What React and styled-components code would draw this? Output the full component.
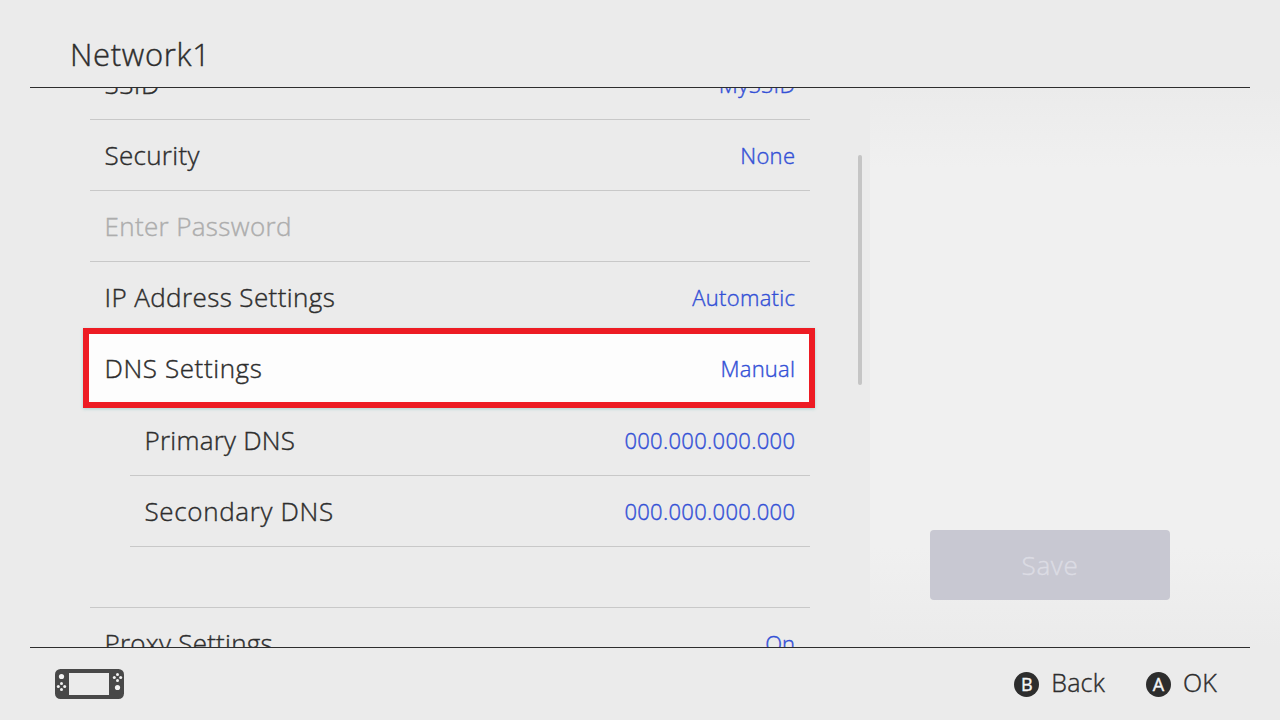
import React from "react"
import styled, { createGlobalStyle } from "styled-components"

const GlobalStyle = createGlobalStyle`
  *,
  *::before {
    box-sizing: border-box;
  }

  body {
    margin: 0;
    background-color: #ebebeb;
    color: #2d2d2d;
    font-family: "Open Sans", "Noto Sans", sans-serif;
    font-weight: 300;
    -webkit-text-stroke: 0.4px;
  }
`

const Screen = styled.div`
  display: flex;
  flex-direction: column;
  width: 1280px;
  height: 720px;
  overflow: hidden;
`

const Header = styled.header`
  display: flex;
  align-items: center;
  height: 88px;
  margin: 0 30px;
  padding: 21px 40px 0;
  border-bottom: 1px solid #2d2d2d;
`

const Title = styled.h1`
  margin: 0;
  font-size: 31px;
  font-weight: 300;
  line-height: 40px;
  letter-spacing: 0.7px;
`

const Content = styled.main`
  display: flex;
  height: 559px;
  overflow: hidden;
`

const ListPane = styled.div`
  display: flex;
  align-items: flex-start;
  width: 870px;
  padding-left: 90px;
`

const List = styled.div`
  width: 720px;
  margin-top: -39px;
`

const Row = styled.div`
  position: relative;
  display: flex;
  align-items: center;
  justify-content: space-between;
  height: 71px;
  margin-left: ${props => (props.$nested ? "40px" : 0)};
  padding: 0 15px;
  border-bottom: 1px solid #c8c8c8;
  color: ${props => (props.$disabled ? "#adadad" : "inherit")};
`

const SelectedRow = styled(Row)`
  height: 72px;
  padding-bottom: 2px;
  border-bottom: 0;

  &::before {
    content: "";
    position: absolute;
    top: -5px;
    left: -7px;
    width: 732px;
    height: 80px;
    border: 6px solid #ed1c24;
    background-color: #fdfdfd;
    box-shadow: 0 1px 3px #a9d6d2;
  }
`

const Gap = styled.div`
  height: 61px;
  border-bottom: 1px solid #c8c8c8;
`

const Label = styled.span`
  position: relative;
  margin-left: -0.5px;
  font-size: 26px;
  line-height: 36px;
  letter-spacing: ${props => props.$track || 0}px;
  white-space: nowrap;
`

const Value = styled.span`
  position: relative;
  margin-right: ${props => -(props.$track || 0)}px;
  color: #3350d6;
  font-size: 22px;
  line-height: 30px;
  letter-spacing: ${props => props.$track || 0}px;
  white-space: nowrap;
`

const ScrollThumb = styled.div`
  width: 4px;
  height: 230px;
  margin: 67px 0 0 48px;
  border-radius: 2px;
  background-color: #c5c5c5;
`

const SidePane = styled.aside`
  flex: 1;
  display: flex;
  align-items: flex-end;
  padding: 0 0 47px 60px;
  background: linear-gradient(#ebebeb, #f0f0f0 80px, #f0f0f0 460px, #ebebeb);
`

const SaveButton = styled.button`
  width: 240px;
  height: 70px;
  padding: 0;
  border: 0;
  border-radius: 4px;
  background-color: #c8c8d2;
  color: #dcdce4;
  font: inherit;
  font-size: 26px;
  letter-spacing: 0.7px;
`

const Footer = styled.footer`
  display: flex;
  align-items: center;
  justify-content: space-between;
  height: 73px;
  margin: 0 30px;
  padding: 0 33px 0 25px;
  border-top: 1px solid #2d2d2d;
`

const Hints = styled.div`
  display: flex;
  gap: 41px;
`

const Hint = styled.div`
  display: flex;
  align-items: center;
  gap: 12px;
`

const KeyBadge = styled.span`
  display: flex;
  align-items: center;
  justify-content: center;
  width: 25px;
  height: 25px;
  border-radius: 50%;
  background-color: #2d2d2d;
  color: #f5f5f5;
  font-size: 18px;
  font-weight: 400;
  line-height: 25px;
`

const HintText = styled.span`
  margin-top: -4px;
  font-size: 25px;
  line-height: 36px;
  letter-spacing: 0.2px;
`

const ConsoleIcon = () => (
  <svg width="69" height="30" viewBox="0 0 69 30">
    <rect width="69" height="30" rx="5.5" fill="#484848" />
    <rect x="14" y="4" width="40" height="22" fill="#ebebeb" />
    <g fill="#f2f2f2">
      <circle cx="6.5" cy="7.5" r="2.6" />
      <circle cx="6.5" cy="14.5" r="1.5" />
      <circle cx="3.3" cy="17.5" r="1.5" />
      <circle cx="9.7" cy="17.5" r="1.5" />
      <circle cx="6.5" cy="20.5" r="1.5" />
      <circle cx="62.5" cy="5.5" r="1.5" />
      <circle cx="59.3" cy="8.5" r="1.5" />
      <circle cx="65.7" cy="8.5" r="1.5" />
      <circle cx="62.5" cy="11.5" r="1.5" />
      <circle cx="62.5" cy="18.5" r="2.6" />
    </g>
  </svg>
)

const App = () => (
  <>
    <GlobalStyle />
    <Screen>
      <Header>
        <Title>Network1</Title>
      </Header>
      <Content>
        <ListPane>
          <List>
            <Row>
              <Label $track={0.5}>SSID</Label>
              <Value $track={0.4}>MySSID</Value>
            </Row>
            <Row>
              <Label $track={0.3}>Security</Label>
              <Value $track={0.3}>None</Value>
            </Row>
            <Row $disabled>
              <Label $track={0.35}>Enter Password</Label>
            </Row>
            <Row>
              <Label $track={0.4}>IP Address Settings</Label>
              <Value $track={0.3}>Automatic</Value>
            </Row>
            <SelectedRow>
              <Label $track={0.6}>DNS Settings</Label>
              <Value $track={0.25}>Manual</Value>
            </SelectedRow>
            <Row $nested>
              <Label $track={0.25}>Primary DNS</Label>
              <Value $track={0.3}>000.000.000.000</Value>
            </Row>
            <Row $nested>
              <Label $track={0.65}>Secondary DNS</Label>
              <Value $track={0.3}>000.000.000.000</Value>
            </Row>
            <Gap />
            <Row>
              <Label $track={0.25}>Proxy Settings</Label>
              <Value>On</Value>
            </Row>
          </List>
          <ScrollThumb />
        </ListPane>
        <SidePane>
          <SaveButton>Save</SaveButton>
        </SidePane>
      </Content>
      <Footer>
        <ConsoleIcon />
        <Hints>
          <Hint>
            <KeyBadge>B</KeyBadge>
            <HintText>Back</HintText>
          </Hint>
          <Hint>
            <KeyBadge>A</KeyBadge>
            <HintText>OK</HintText>
          </Hint>
        </Hints>
      </Footer>
    </Screen>
  </>
)

export default App
